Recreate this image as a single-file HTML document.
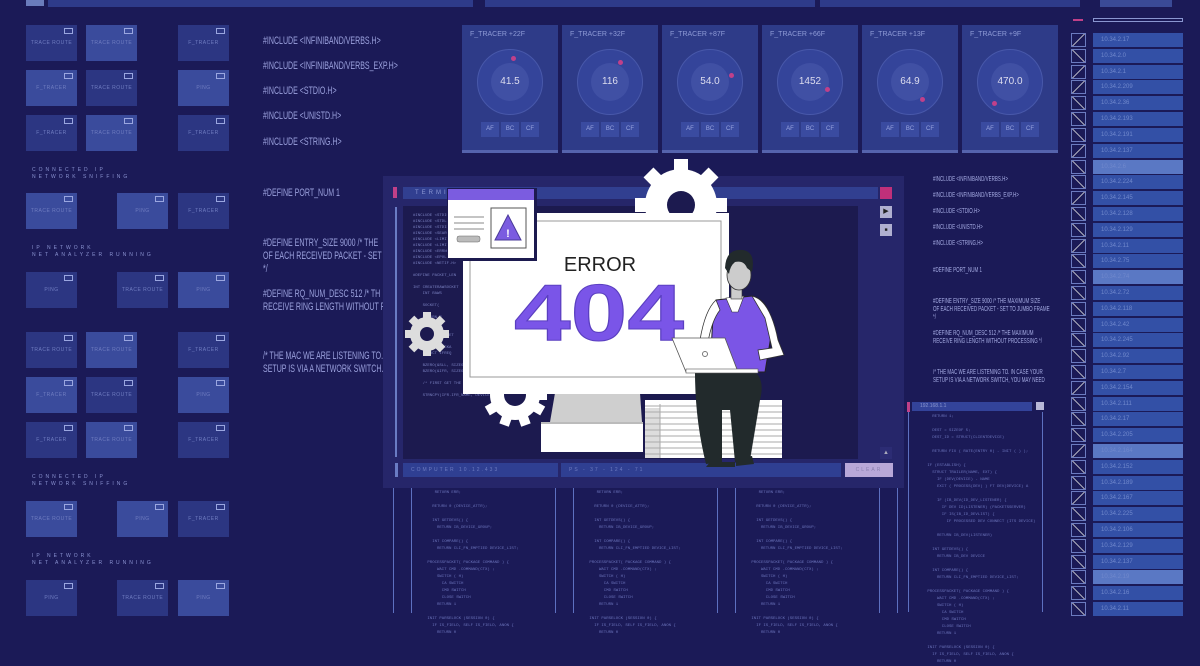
<!DOCTYPE html>
<html><head><meta charset="utf-8"><style>
*{margin:0;padding:0;box-sizing:border-box}
body{width:1200px;height:630px;overflow:hidden;background:#1b1a57;font-family:"Liberation Sans",sans-serif;position:relative}
.a{position:absolute}
.t{position:absolute;width:51px;height:36px;background:#2c3682;color:#6f7cc0;font-size:5px;text-align:center;line-height:36px;letter-spacing:.5px}
.t.l{background:#3a4b9c}
.t:after{content:"";position:absolute;right:4px;top:3px;width:7px;height:4px;border:1px solid #9aa6e0}
.lb{position:absolute;font-size:5px;color:#8a92d0;letter-spacing:3px;line-height:7px}
.c{position:absolute;color:#9aa0dc;font-family:"Liberation Sans Narrow","Liberation Sans",sans-serif;font-size:11px;transform:scaleX(.64);transform-origin:left;white-space:nowrap}
.g{position:absolute;top:25px;width:96px;height:128px;background:#2e3b88;border-bottom:3px solid #5563ad}
.g .h{position:absolute;left:8px;top:6px;font-size:7px;color:#8e9ad6}
.g .o{position:absolute;left:15px;top:24px;width:66px;height:66px;border-radius:50%;background:#34449a;border:1px solid #4858aa}
.g .i{position:absolute;left:29px;top:38px;width:38px;height:38px;border-radius:50%;background:#4050a4;color:#dde;font-size:10px;text-align:center;line-height:38px}
.g .d{position:absolute;width:5px;height:5px;border-radius:50%;background:#c0408a}
.g .b{position:absolute;top:97px;width:18px;height:15px;background:#3a4ba0;color:#9aa6e0;font-size:6px;text-align:center;line-height:15px}
.r{position:absolute;left:1093px;width:90px;height:14px;background:#3350a6;color:#7088cc;font-size:6px;line-height:14px;padding-left:8px}
.r.h{background:#5a78c4}
.x{position:absolute;left:1071px;width:15px;height:14px;border:1px solid #6b7bc0;background:linear-gradient(135deg,transparent 46%,#aab 48%,#aab 52%,transparent 54%)}
.x.y{background:linear-gradient(45deg,transparent 46%,#aab 48%,#aab 52%,transparent 54%)}
.sc{position:absolute;color:#6c74bc;font-size:4px;line-height:7px;white-space:pre;font-family:"Liberation Mono",monospace}
.cp{position:absolute;top:488px;width:1px;height:125px;background:#5d70c0}
</style></head><body>
<div class="a" style="left:26px;top:0;width:18px;height:6px;background:#6a7cbc"></div>
<div class="a" style="left:48px;top:0;width:425px;height:7px;background:#2e3b8a"></div>
<div class="a" style="left:485px;top:0;width:330px;height:7px;background:#2e3b8a"></div>
<div class="a" style="left:820px;top:0;width:260px;height:7px;background:#2e3b8a"></div>
<div class="a" style="left:1100px;top:0;width:72px;height:7px;background:#3a4a96"></div>
<div class="a" style="left:1093px;top:18px;width:90px;height:4px;border:1px solid #8a96d0"></div>
<div class="a" style="left:1073px;top:19px;width:10px;height:2px;background:#c04088"></div>

<div class="t" style="left:26px;top:25px">TRACE ROUTE</div>
<div class="t l" style="left:86px;top:25px">TRACE ROUTE</div>
<div class="t" style="left:178px;top:25px">F_TRACER</div>
<div class="t l" style="left:26px;top:70px">F_TRACER</div>
<div class="t" style="left:86px;top:70px">TRACE ROUTE</div>
<div class="t l" style="left:178px;top:70px">PING</div>
<div class="t" style="left:26px;top:115px">F_TRACER</div>
<div class="t l" style="left:86px;top:115px">TRACE ROUTE</div>
<div class="t" style="left:178px;top:115px">F_TRACER</div>
<div class="lb" style="left:32px;top:167px">CONNECTED IP<br>NETWORK SNIFFING</div>
<div class="t l" style="left:26px;top:193px">TRACE ROUTE</div>
<div class="t l" style="left:117px;top:193px">PING</div>
<div class="t" style="left:178px;top:193px">F_TRACER</div>
<div class="lb" style="left:32px;top:245px">IP NETWORK<br>NET ANALYZER RUNNING</div>
<div class="t" style="left:26px;top:272px">PING</div>
<div class="t" style="left:117px;top:272px">TRACE ROUTE</div>
<div class="t l" style="left:178px;top:272px">PING</div>
<div class="t" style="left:26px;top:332px">TRACE ROUTE</div>
<div class="t l" style="left:86px;top:332px">TRACE ROUTE</div>
<div class="t" style="left:178px;top:332px">F_TRACER</div>
<div class="t l" style="left:26px;top:377px">F_TRACER</div>
<div class="t" style="left:86px;top:377px">TRACE ROUTE</div>
<div class="t l" style="left:178px;top:377px">PING</div>
<div class="t" style="left:26px;top:422px">F_TRACER</div>
<div class="t l" style="left:86px;top:422px">TRACE ROUTE</div>
<div class="t" style="left:178px;top:422px">F_TRACER</div>
<div class="lb" style="left:32px;top:474px">CONNECTED IP<br>NETWORK SNIFFING</div>
<div class="t l" style="left:26px;top:501px">TRACE ROUTE</div>
<div class="t l" style="left:117px;top:501px">PING</div>
<div class="t" style="left:178px;top:501px">F_TRACER</div>
<div class="lb" style="left:32px;top:553px">IP NETWORK<br>NET ANALYZER RUNNING</div>
<div class="t" style="left:26px;top:580px">PING</div>
<div class="t" style="left:117px;top:580px">TRACE ROUTE</div>
<div class="t l" style="left:178px;top:580px">PING</div>

<div class="c" style="left:263px;top:35px">#INCLUDE &lt;INFINIBAND/VERBS.H&gt;</div>
<div class="c" style="left:263px;top:60px">#INCLUDE &lt;INFINIBAND/VERBS_EXP.H&gt;</div>
<div class="c" style="left:263px;top:85px">#INCLUDE &lt;STDIO.H&gt;</div>
<div class="c" style="left:263px;top:110px">#INCLUDE &lt;UNISTD.H&gt;</div>
<div class="c" style="left:263px;top:136px">#INCLUDE &lt;STRING.H&gt;</div>
<div class="c" style="left:263px;top:187px">#DEFINE PORT_NUM 1</div>
<div class="c" style="left:263px;top:237px;line-height:13px">#DEFINE ENTRY_SIZE 9000 /* THE<br>OF EACH RECEIVED PACKET - SET T<br>*/</div>
<div class="c" style="left:263px;top:288px;line-height:13px">#DEFINE RQ_NUM_DESC 512 /* TH<br>RECEIVE RING LENGTH WITHOUT PR</div>
<div class="c" style="left:263px;top:350px;line-height:13px">/* THE MAC WE ARE LISTENING TO.<br>SETUP IS VIA A NETWORK SWITCH.</div>

<div class="g" style="left:462px"><div class="h">F_TRACER +22F</div><div class="o"></div><div class="i">41.5</div><div class="d" style="left:49px;top:31px"></div><div class="b" style="left:19px">AF</div><div class="b" style="left:39px">BC</div><div class="b" style="left:59px">CF</div></div>
<div class="g" style="left:562px"><div class="h">F_TRACER +32F</div><div class="o"></div><div class="i">116</div><div class="d" style="left:56px;top:35px"></div><div class="b" style="left:19px">AF</div><div class="b" style="left:39px">BC</div><div class="b" style="left:59px">CF</div></div>
<div class="g" style="left:662px"><div class="h">F_TRACER +87F</div><div class="o"></div><div class="i">54.0</div><div class="d" style="left:67px;top:48px"></div><div class="b" style="left:19px">AF</div><div class="b" style="left:39px">BC</div><div class="b" style="left:59px">CF</div></div>
<div class="g" style="left:762px"><div class="h">F_TRACER +66F</div><div class="o"></div><div class="i">1452</div><div class="d" style="left:63px;top:62px"></div><div class="b" style="left:19px">AF</div><div class="b" style="left:39px">BC</div><div class="b" style="left:59px">CF</div></div>
<div class="g" style="left:862px"><div class="h">F_TRACER +13F</div><div class="o"></div><div class="i">64.9</div><div class="d" style="left:58px;top:72px"></div><div class="b" style="left:19px">AF</div><div class="b" style="left:39px">BC</div><div class="b" style="left:59px">CF</div></div>
<div class="g" style="left:962px"><div class="h">F_TRACER +9F</div><div class="o"></div><div class="i">470.0</div><div class="d" style="left:30px;top:76px"></div><div class="b" style="left:19px">AF</div><div class="b" style="left:39px">BC</div><div class="b" style="left:59px">CF</div></div>

<div class="x" style="top:33px"></div><div class="r" style="top:33px">10.34.2.17</div>
<div class="x y" style="top:49px"></div><div class="r" style="top:49px">10.34.2.0</div>
<div class="x" style="top:65px"></div><div class="r" style="top:65px">10.34.2.1</div>
<div class="x" style="top:80px"></div><div class="r" style="top:80px">10.34.2.209</div>
<div class="x y" style="top:96px"></div><div class="r" style="top:96px">10.34.2.36</div>
<div class="x y" style="top:112px"></div><div class="r" style="top:112px">10.34.2.193</div>
<div class="x y" style="top:128px"></div><div class="r" style="top:128px">10.34.2.191</div>
<div class="x" style="top:144px"></div><div class="r" style="top:144px">10.34.2.137</div>
<div class="x y" style="top:160px"></div><div class="r h" style="top:160px">10.34.2.6</div>
<div class="x y" style="top:175px"></div><div class="r" style="top:175px">10.34.2.224</div>
<div class="x" style="top:191px"></div><div class="r" style="top:191px">10.34.2.145</div>
<div class="x y" style="top:207px"></div><div class="r" style="top:207px">10.34.2.128</div>
<div class="x y" style="top:223px"></div><div class="r" style="top:223px">10.34.2.129</div>
<div class="x" style="top:239px"></div><div class="r" style="top:239px">10.34.2.11</div>
<div class="x y" style="top:254px"></div><div class="r" style="top:254px">10.34.2.75</div>
<div class="x y" style="top:270px"></div><div class="r h" style="top:270px">10.34.2.74</div>
<div class="x y" style="top:286px"></div><div class="r" style="top:286px">10.34.2.72</div>
<div class="x y" style="top:302px"></div><div class="r" style="top:302px">10.34.2.118</div>
<div class="x y" style="top:318px"></div><div class="r" style="top:318px">10.34.2.42</div>
<div class="x y" style="top:333px"></div><div class="r" style="top:333px">10.34.2.245</div>
<div class="x y" style="top:349px"></div><div class="r" style="top:349px">10.34.2.92</div>
<div class="x y" style="top:365px"></div><div class="r" style="top:365px">10.34.2.7</div>
<div class="x" style="top:381px"></div><div class="r" style="top:381px">10.34.2.154</div>
<div class="x y" style="top:397px"></div><div class="r" style="top:397px">10.34.2.111</div>
<div class="x y" style="top:412px"></div><div class="r" style="top:412px">10.34.2.17</div>
<div class="x y" style="top:428px"></div><div class="r" style="top:428px">10.34.2.205</div>
<div class="x" style="top:444px"></div><div class="r h" style="top:444px">10.34.2.164</div>
<div class="x y" style="top:460px"></div><div class="r" style="top:460px">10.34.2.152</div>
<div class="x y" style="top:476px"></div><div class="r" style="top:476px">10.34.2.189</div>
<div class="x" style="top:491px"></div><div class="r" style="top:491px">10.34.2.167</div>
<div class="x y" style="top:507px"></div><div class="r" style="top:507px">10.34.2.225</div>
<div class="x y" style="top:523px"></div><div class="r" style="top:523px">10.34.2.106</div>
<div class="x y" style="top:539px"></div><div class="r" style="top:539px">10.34.2.129</div>
<div class="x y" style="top:555px"></div><div class="r" style="top:555px">10.34.2.137</div>
<div class="x y" style="top:570px"></div><div class="r h" style="top:570px">10.34.2.19</div>
<div class="x y" style="top:586px"></div><div class="r" style="top:586px">10.34.2.16</div>
<div class="x y" style="top:602px"></div><div class="r" style="top:602px">10.34.2.11</div>

<div class="c" style="left:933px;top:172px;font-size:7px;line-height:16px;color:#a2a8e0">#INCLUDE &lt;INFINIBAND/VERBS.H&gt;<br>#INCLUDE &lt;INFINIBAND/VERBS_EXP.H&gt;<br>#INCLUDE &lt;STDIO.H&gt;<br>#INCLUDE &lt;UNISTD.H&gt;<br>#INCLUDE &lt;STRING.H&gt;</div>
<div class="c" style="left:933px;top:267px;font-size:7px;color:#a2a8e0">#DEFINE PORT_NUM 1</div>
<div class="c" style="left:933px;top:298px;font-size:7px;line-height:8px;color:#a2a8e0">#DEFINE ENTRY_SIZE 9000 /* THE MAXIMUM SIZE<br>OF EACH RECEIVED PACKET - SET TO JUMBO FRAME<br>*/</div>
<div class="c" style="left:933px;top:330px;font-size:7px;line-height:8px;color:#a2a8e0">#DEFINE RQ_NUM_DESC 512 /* THE MAXIMUM<br>RECEIVE RING LENGTH WITHOUT PROCESSING */</div>
<div class="c" style="left:933px;top:369px;font-size:7px;line-height:8px;color:#a2a8e0">/* THE MAC WE ARE LISTENING TO. IN CASE YOUR<br>SETUP IS VIA A NETWORK SWITCH, YOU MAY NEED</div>

<div class="cp" style="left:393px"></div><div class="cp" style="left:411px"></div>
<div class="cp" style="left:555px"></div><div class="cp" style="left:573px"></div>
<div class="cp" style="left:717px"></div><div class="cp" style="left:735px"></div>
<div class="cp" style="left:879px"></div><div class="cp" style="left:897px"></div>
<div class="sc" style="left:425px;top:490px">    RETURN ERR;

   RETURN 0 (DEVICE_ATTR);

   INT GETDEVS() {
     RETURN IB_DEVICE_GROUP;

   INT COMPARE() {
     RETURN CLI_FN_EMPTIED DEVICE_LIST;

 PROCESSPACKET( PACKAGE COMMAND ) {
     WAIT CMD .COMMAND(CTX) ;
     SWITCH ( H)
       CA SWITCH
       CMD SWITCH
       CLOSE SWITCH
     RETURN 1

 INIT PARSELOCK (SESSION 0) {
   IF IS_FIELD, SELF IS_FIELD, ANON {
     RETURN 0</div>
<div class="sc" style="left:587px;top:490px">    RETURN ERR;

   RETURN 0 (DEVICE_ATTR);

   INT GETDEVS() {
     RETURN IB_DEVICE_GROUP;

   INT COMPARE() {
     RETURN CLI_FN_EMPTIED DEVICE_LIST;

 PROCESSPACKET( PACKAGE COMMAND ) {
     WAIT CMD .COMMAND(CTX) ;
     SWITCH ( H)
       CA SWITCH
       CMD SWITCH
       CLOSE SWITCH
     RETURN 1

 INIT PARSELOCK (SESSION 0) {
   IF IS_FIELD, SELF IS_FIELD, ANON {
     RETURN 0</div>
<div class="sc" style="left:749px;top:490px">    RETURN ERR;

   RETURN 0 (DEVICE_ATTR);

   INT GETDEVS() {
     RETURN IB_DEVICE_GROUP;

   INT COMPARE() {
     RETURN CLI_FN_EMPTIED DEVICE_LIST;

 PROCESSPACKET( PACKAGE COMMAND ) {
     WAIT CMD .COMMAND(CTX) ;
     SWITCH ( H)
       CA SWITCH
       CMD SWITCH
       CLOSE SWITCH
     RETURN 1

 INIT PARSELOCK (SESSION 0) {
   IF IS_FIELD, SELF IS_FIELD, ANON {
     RETURN 0</div>

<div class="a" style="left:907px;top:402px;width:3px;height:10px;background:#c04088"></div>
<div class="a" style="left:912px;top:402px;width:120px;height:9px;background:#33439a;color:#8a96d0;font-size:5px;line-height:9px;padding-left:8px">192.168.1.1</div>
<div class="a" style="left:1036px;top:402px;width:8px;height:8px;background:#b8b8d8"></div>
<div class="cp" style="left:908px;top:412px;height:200px"></div><div class="cp" style="left:1042px;top:412px;height:200px"></div>
<div class="sc" style="left:925px;top:414px">   RETURN 1;

   DEST = SIZEOF 5;
   DEST_ID = STRUCT(CLIENTDEVICE)

   RETURN FIX ( RATE(ENTRY 0) - INIT ( ) );

 IF (ESTABLISH) {
   STRUCT TRAILER(NAME, EXT) {
     IF (DEV(DEVICE) - NAME
     EXIT ( PROCESS(DEV) ) FT DEV(DEVICE) A

     IF (IB_DEV(ID_DEV_LISTENER) {
       IF DEV ID(LISTENER) (PACKETSSERVER)
       IF IS(IB_ID_DEVLIST) {
         IF PROCESSED DEV CONNECT (ITS DEVICE)

     RETURN IB_DEV(LISTENER)

   INT GETDEVS() {
     RETURN IB_DEV DEVICE

   INT COMPARE() {
     RETURN CLI_FN_EMPTIED DEVICE_LIST;

 PROCESSPACKET( PACKAGE COMMAND ) {
     WAIT CMD .COMMAND(CTX) ;
     SWITCH ( H)
       CA SWITCH
       CMD SWITCH
       CLOSE SWITCH
     RETURN 1

 INIT PARSELOCK (SESSION 0) {
   IF IS_FIELD, SELF IS_FIELD, ANON {
     RETURN 0</div>

<div class="a" style="left:383px;top:176px;width:521px;height:312px;background:#26266a"></div>
<div class="a" style="left:393px;top:187px;width:4px;height:11px;background:#c04088"></div>
<div class="a" style="left:403px;top:187px;width:475px;height:12px;background:#313f90;color:#8b97d3;font-size:6px;letter-spacing:3px;line-height:12px;padding-left:12px">TERMINAL</div>
<div class="a" style="left:880px;top:187px;width:12px;height:12px;background:#c0307a"></div>
<div class="a" style="left:880px;top:206px;width:12px;height:12px;background:#b0b0d0;color:#222;font-size:7px;text-align:center;line-height:12px">▶</div>
<div class="a" style="left:880px;top:224px;width:12px;height:12px;background:#b0b0d0;color:#222;font-size:5px;text-align:center;line-height:12px">■</div>
<div class="a" style="left:880px;top:447px;width:12px;height:12px;background:#2c2c74;color:#aab;font-size:6px;text-align:center;line-height:12px">▲</div>
<div class="a" style="left:395px;top:207px;width:2px;height:250px;background:#6a7cc4"></div>
<div class="a" style="left:403px;top:206px;width:455px;height:253px;background:#1c1a4f"></div>
<div class="sc" style="left:413px;top:213px;font-size:4px;line-height:6px;color:#7a80c0">#INCLUDE &lt;STDIO&gt;
#INCLUDE &lt;STDLIB&gt;
#INCLUDE &lt;STDINT&gt;
#INCLUDE &lt;SEARCH&gt;
#INCLUDE &lt;LIMITS&gt;
#INCLUDE &lt;LIMITS&gt;
#INCLUDE &lt;ERRNO&gt;
#INCLUDE &lt;EPOLL&gt;
#INCLUDE &lt;NETIF.H&gt;

#DEFINE PACKET_LEN

INT CREATERAWSOCKET
    INT RAWS

    SOCKET(

    RETURN R
}

INT BINDRAWSOCKET
{
    STRUCT SOCKA
    STRUCT IFREQ

    BZERO(&amp;SLL, SIZEOF
    BZERO(&amp;IFR, SIZEOF

    /* FIRST GET THE INTERFACE INDEX */

    STRNCPY(IFR.IFR_NAME, DEVICE, IF</div>
<div class="a" style="left:395px;top:463px;width:3px;height:14px;background:#6a7cc4"></div>
<div class="a" style="left:403px;top:463px;width:155px;height:14px;background:#2f3f92;color:#6c7ac0;font-size:5px;letter-spacing:2px;line-height:14px;padding-left:8px">COMPUTER 10.12.433</div>
<div class="a" style="left:561px;top:463px;width:280px;height:14px;background:#2f3f92;color:#6c7ac0;font-size:5px;letter-spacing:2px;line-height:14px;padding-left:8px">PS - 37 - 124 - 71</div>
<div class="a" style="left:845px;top:463px;width:48px;height:14px;background:#b8a8d8;color:#8a80b0;font-size:5px;letter-spacing:2px;line-height:14px;text-align:center">CLEAR</div>

<svg class="a" style="left:0;top:0" width="1200" height="630" viewBox="0 0 1200 630">
 <g fill="#fff">
  <circle cx="681" cy="205" r="36"/>
  <g transform="translate(681 205)">
   <rect x="-7" y="-46" width="14" height="14"/><rect x="-7" y="-46" width="14" height="14" transform="rotate(45)"/><rect x="-7" y="-46" width="14" height="14" transform="rotate(-45)"/><rect x="-7" y="-46" width="14" height="14" transform="rotate(90)"/><rect x="-7" y="-46" width="14" height="14" transform="rotate(-90)"/>
  </g>
 </g>
 <circle cx="681" cy="205" r="14" fill="#1c1a4f"/>
 <g fill="#ddd" transform="translate(427 334)">
  <circle r="17"/>
  <rect x="-4" y="-22" width="8" height="8"/><rect x="-4" y="-22" width="8" height="8" transform="rotate(45)"/><rect x="-4" y="-22" width="8" height="8" transform="rotate(90)"/><rect x="-4" y="-22" width="8" height="8" transform="rotate(135)"/><rect x="-4" y="-22" width="8" height="8" transform="rotate(180)"/><rect x="-4" y="-22" width="8" height="8" transform="rotate(225)"/><rect x="-4" y="-22" width="8" height="8" transform="rotate(270)"/><rect x="-4" y="-22" width="8" height="8" transform="rotate(315)"/>
  <circle r="7" fill="#1c1a4f"/>
 </g>
 <g fill="#fff" transform="translate(515 395)">
  <circle r="25"/>
  <rect x="-5" y="-32" width="10" height="10" transform="rotate(120)"/><rect x="-5" y="-32" width="10" height="10" transform="rotate(160)"/><rect x="-5" y="-32" width="10" height="10" transform="rotate(200)"/><rect x="-5" y="-32" width="10" height="10" transform="rotate(240)"/><rect x="-5" y="-32" width="10" height="10" transform="rotate(90)"/>
  <circle r="11" fill="#1c1a4f"/>
 </g>
 <polygon points="555,393 640,393 642,422 550,422" fill="#cfcfcf"/>
 <rect x="541" y="422" width="102" height="30" fill="#fff"/>
 <rect x="541" y="422" width="102" height="2" fill="#bbb"/>
 <rect x="463" y="213" width="266" height="181" fill="#fff"/>
 <rect x="470" y="221" width="251" height="156" fill="#fff" stroke="#999" stroke-width="1"/>
 <text x="600" y="271" font-family="Liberation Sans" font-size="20" fill="#222" text-anchor="middle">ERROR</text>
 <text x="514" y="340" font-family="Liberation Sans" font-weight="bold" font-size="80" fill="#7a55e8" stroke="#5a3fc0" stroke-width="1" textLength="170" lengthAdjust="spacingAndGlyphs">404</text>
 <rect x="447" y="188" width="90" height="73" fill="#1c1a4f"/>
 <rect x="448" y="189" width="86" height="69" fill="#fff"/>
 <rect x="448" y="189" width="86" height="11" fill="#7b5ce0"/>
 <line x1="454" y1="217" x2="484" y2="217" stroke="#888"/><line x1="454" y1="223" x2="484" y2="223" stroke="#888"/><line x1="454" y1="229" x2="484" y2="229" stroke="#888"/>
 <rect x="457" y="236" width="23" height="6" rx="2" fill="#bbb" stroke="#666" stroke-width=".5"/>
 <rect x="491" y="208" width="35" height="40" fill="#fff" stroke="#555"/>
 <polygon points="508,215 521,240 495,240" fill="#7b5ce0" stroke="#4a3a9a"/>
 <text x="508" y="237" font-family="Liberation Sans" font-size="11" fill="#fff" text-anchor="middle" font-weight="bold">!</text>
 <rect x="645" y="400" width="137" height="58" fill="#fff"/>
 <rect x="645" y="408" width="15" height="50" fill="#ddd"/>
 <g stroke="#aaa" stroke-width="1">
  <line x1="645" y1="406" x2="782" y2="406"/><line x1="645" y1="412" x2="782" y2="412"/><line x1="645" y1="418" x2="782" y2="418"/><line x1="645" y1="424" x2="782" y2="424"/><line x1="645" y1="430" x2="782" y2="430"/><line x1="645" y1="436" x2="782" y2="436"/><line x1="645" y1="442" x2="782" y2="442"/><line x1="645" y1="448" x2="782" y2="448"/><line x1="645" y1="454" x2="782" y2="454"/>
  <line x1="660" y1="404" x2="660" y2="458"/>
 </g>
 <path d="M695 372 L755 372 Q765 380 760 400 L750 460 L735 462 L730 410 L722 410 L722 462 L706 464 Q695 420 695 372Z" fill="#222a2c"/>
 <path d="M716 300 L752 296 Q770 300 772 330 L765 372 L712 372 Q710 330 716 300Z" fill="#7b55e6" stroke="#222" stroke-width="1"/>
 <path d="M752 296 Q770 300 778 340 L784 355 L760 360 L758 350 L772 348 L765 318Z" fill="#fff" stroke="#333" stroke-width=".8"/>
 <path d="M716 300 Q705 310 700 340 L708 342 Q712 320 720 310Z" fill="#fff" stroke="#333" stroke-width=".8"/>
 <polygon points="726,298 744,296 738,312 732,312" fill="#fff" stroke="#333" stroke-width=".6"/>
 <rect x="731" y="285" width="11" height="14" fill="#ccc" stroke="#333" stroke-width=".6"/>
 <ellipse cx="739" cy="275" rx="12" ry="15" fill="#ccc" stroke="#333" stroke-width=".8"/>
 <path d="M725 268 Q726 248 743 250 Q756 252 752 272 L747 268 Q744 260 735 262 Q730 266 729 274Z" fill="#222a2c"/>
 <polygon points="672,338 725,338 738,372 686,372" fill="#fff" stroke="#555" stroke-width=".8"/>
 <circle cx="705" cy="354" r="2.5" fill="none" stroke="#777"/>
 <rect x="686" y="369" width="72" height="4" fill="#fff" stroke="#555" stroke-width=".6"/>
 <path d="M710 462 L735 462 L735 467 L706 467Z M736 458 L752 456 L754 464 L736 466Z" fill="#222a2c"/>
</svg>
</body></html>
